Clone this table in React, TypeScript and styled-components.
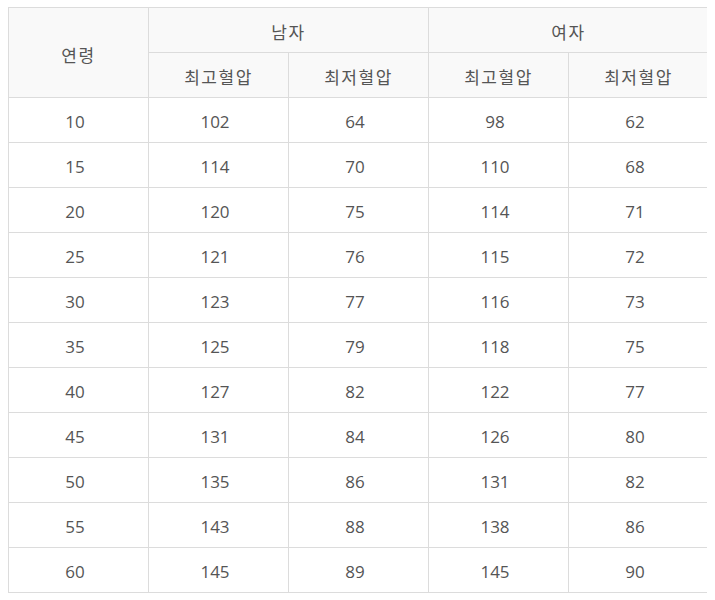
import React from "react";
import styled, { createGlobalStyle } from "styled-components";

const Global = createGlobalStyle`
  body {
    margin: 7px 8px 8px 8px;
    background: #fff;
    font-family: "Open Sans", "Noto Sans CJK KR", sans-serif;
  }
`;

const Table = styled.table`
  border-collapse: collapse;
  width: 701px;
  table-layout: fixed;
  color: #555;
  font-size: 16px;
`;

const Col = styled.col`
  width: 140px;
`;

const Th = styled.th`
  background: #f9f9f9;
  border: 1px solid #dcdcdc;
  font-weight: normal;
  font-size: 17px;
  letter-spacing: 1.5px;
  height: 41px;
  padding: 3px 0 0 0;
  text-align: center;
  vertical-align: middle;
`;

const Td = styled.td`
  border: 1px solid #dcdcdc;
  height: 41px;
  padding: 3px 7px 0 0;
  font-size: 17px;
  text-align: center;
  vertical-align: middle;
  background: #fff;
`;

const rows: number[][] = [
  [10, 102, 64, 98, 62],
  [15, 114, 70, 110, 68],
  [20, 120, 75, 114, 71],
  [25, 121, 76, 115, 72],
  [30, 123, 77, 116, 73],
  [35, 125, 79, 118, 75],
  [40, 127, 82, 122, 77],
  [45, 131, 84, 126, 80],
  [50, 135, 86, 131, 82],
  [55, 143, 88, 138, 86],
  [60, 145, 89, 145, 90],
];

export default function App() {
  return (
    <>
      <Global />
      <Table>
        <colgroup>
          {[0, 1, 2, 3, 4].map((i) => (
            <Col key={i} />
          ))}
        </colgroup>
        <thead>
          <tr>
            <Th rowSpan={2}>연령</Th>
            <Th colSpan={2}>남자</Th>
            <Th colSpan={2}>여자</Th>
          </tr>
          <tr>
            <Th>최고혈압</Th>
            <Th>최저혈압</Th>
            <Th>최고혈압</Th>
            <Th>최저혈압</Th>
          </tr>
        </thead>
        <tbody>
          {rows.map((r) => (
            <tr key={r[0]}>
              {r.map((v, i) => (
                <Td key={i}>{v}</Td>
              ))}
            </tr>
          ))}
        </tbody>
      </Table>
    </>
  );
}
